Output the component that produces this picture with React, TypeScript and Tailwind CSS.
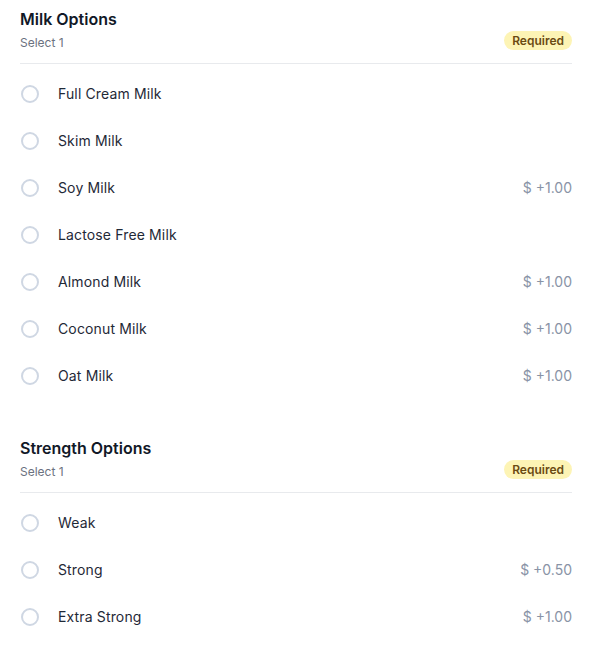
import React from 'react'

type Option = { label: string; price?: string }

const sections: { title: string; options: Option[] }[] = [
  {
    title: 'Milk Options',
    options: [
      { label: 'Full Cream Milk' },
      { label: 'Skim Milk' },
      { label: 'Soy Milk', price: '$ +1.00' },
      { label: 'Lactose Free Milk' },
      { label: 'Almond Milk', price: '$ +1.00' },
      { label: 'Coconut Milk', price: '$ +1.00' },
      { label: 'Oat Milk', price: '$ +1.00' },
    ],
  },
  {
    title: 'Strength Options',
    options: [
      { label: 'Weak' },
      { label: 'Strong', price: '$ +0.50' },
      { label: 'Extra Strong', price: '$ +1.00' },
    ],
  },
]

function OptionGroup({ title, options }: { title: string; options: Option[] }) {
  return (
    <section>
      {/* header */}
      <div className="border-b border-[#e8eaed] pb-[10px]">
        <h2 className="text-base leading-6 font-semibold text-[#111827]">{title}</h2>
        <div className="flex items-start justify-between">
          <span className="pt-[2px] text-xs leading-5 text-[#6b7280]">Select 1</span>
          <span className="rounded-full bg-[#fdf4b5] px-2 text-xs leading-[19px] font-semibold text-[#6b4a12]">
            Required
          </span>
        </div>
      </div>

      {/* options */}
      <div className="pt-[6px]">
        {options.map((opt) => (
          <label key={opt.label} className="flex h-[47px] items-center">
            <span className="ml-px size-[18px] shrink-0 rounded-full border-2 border-[#cfd7e3]" />
            <span className="ml-[19px] flex-1 text-sm tracking-[0.01em] text-[#1f2937]">{opt.label}</span>
            {opt.price && <span className="text-sm text-[#8993a6]">{opt.price}</span>}
          </label>
        ))}
      </div>
    </section>
  )
}

export default function App() {
  return (
    <div
      className="min-h-screen bg-white pt-[7px] pl-5 pr-[23px]"
      style={{ fontFamily: 'Inter, "Noto Sans", sans-serif' }}
    >
      <div className="flex flex-col gap-[37px]">
        {sections.map((s) => (
          <OptionGroup key={s.title} title={s.title} options={s.options} />
        ))}
      </div>
    </div>
  )
}
